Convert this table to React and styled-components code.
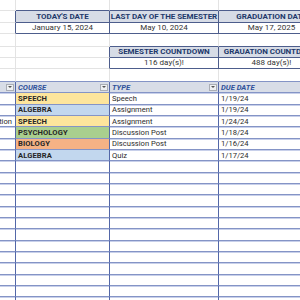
import React from 'react';
import styled, { createGlobalStyle } from 'styled-components';

const GRID = '#e3e3e3';
const BOX = '#4d5d8c';
const TV = '#5367a8';
const TH = '#8494c6';

const GlobalStyle = createGlobalStyle`
  html, body { margin: 0; padding: 0; background: #fff; overflow: hidden; }
  * { box-sizing: border-box; }
`;

const Sheet = styled.div`
  display: grid;
  grid-template-columns: 16px 94px 109px 106px;
  grid-template-rows: 11px 11.5px 11.5px 12.5px 11px 11.5px 13px repeat(20, 11.333px);
  width: 300px;
  height: 300px;
  overflow: hidden;
  font-family: Roboto, "Liberation Sans", sans-serif;
  color: #2b2b2b;
`;

const Cell = styled.div`
  display: flex;
  align-items: center;
  justify-content: ${(p) => p.$align || 'flex-start'};
  padding: 0 2px;
  white-space: nowrap;
  overflow: hidden;
  font-size: 7.6px;
  background: ${(p) => p.$bg || 'transparent'};
  border-right: 1px solid ${(p) => p.$r || GRID};
  border-bottom: 1px solid ${(p) => p.$b || GRID};
  box-shadow: ${(p) => (p.$b === TH ? '0 1px 0 #c8d0ea' : 'none')};
`;

const BoxHead = styled(Cell).attrs({ $align: 'center', $bg: '#d7dce6', $r: BOX, $b: BOX })`
  font-size: 8px;
  font-weight: 700;
  color: #22396b;
  letter-spacing: -0.05px;
`;

const BoxValue = styled(Cell).attrs({ $align: 'center', $r: BOX, $b: BOX })`
  font-size: 8px;
  color: #333;
`;

const ColHead = styled(Cell).attrs({ $bg: '#d8dde7', $r: TV, $b: TH })`
  font-weight: 700;
  font-style: italic;
  color: #2f519a;
  padding-right: 1px;
`;

const DropButton = styled.span`
  margin-left: auto;
  flex: none;
  width: 8px;
  height: 7px;
  border: 1px solid #a9adb5;
  background: #eef0f3;
  display: flex;
  align-items: center;
  justify-content: center;
  &::after {
    content: '';
    border-left: 2px solid transparent;
    border-right: 2px solid transparent;
    border-top: 2.5px solid #555;
  }
`;

const DataCell = styled(Cell).attrs({ $r: TV, $b: TH })``;

const Overflow = styled(DataCell)`
  justify-content: flex-end;
  padding-right: 3px;
`;

const CourseCell = styled(DataCell)`
  font-weight: 700;
  color: #262626;
  letter-spacing: 0.1px;
`;

const FILLS = {
  SPEECH: '#fde59c',
  ALGEBRA: '#c2d7ee',
  PSYCHOLOGY: '#a9cf8e',
  BIOLOGY: '#f5b285',
};

const rows = [
  { a: '', course: 'SPEECH', type: 'Speech', due: '1/19/24' },
  { a: '', course: 'ALGEBRA', type: 'Assignment', due: '1/19/24' },
  { a: 'Speech Preparation', course: 'SPEECH', type: 'Assignment', due: '1/24/24' },
  { a: '', course: 'PSYCHOLOGY', type: 'Discussion Post', due: '1/18/24' },
  { a: '', course: 'BIOLOGY', type: 'Discussion Post', due: '1/16/24' },
  { a: '', course: 'ALGEBRA', type: 'Quiz', due: '1/17/24' },
];

const EMPTY_ROWS = 14;

export default function App() {
  return (
    <>
      <GlobalStyle />
      <Sheet>
        {/* row 1 */}
        <Cell />
        <Cell $b={BOX} />
        <Cell $b={BOX} />
        <Cell $b={BOX} />
        {/* row 2 */}
        <Cell $r={BOX} />
        <BoxHead>TODAY&apos;S DATE</BoxHead>
        <BoxHead>LAST DAY OF THE SEMESTER</BoxHead>
        <BoxHead>GRADUATION DATE</BoxHead>
        {/* row 3 */}
        <Cell $r={BOX} />
        <BoxValue>January 15, 2024</BoxValue>
        <BoxValue>May 10, 2024</BoxValue>
        <BoxValue>May 17, 2025</BoxValue>
        {/* row 4 */}
        <Cell />
        <Cell />
        <Cell $b={BOX} />
        <Cell $b={BOX} />
        {/* row 5 */}
        <Cell />
        <Cell $r={BOX} />
        <BoxHead>SEMESTER COUNTDOWN</BoxHead>
        <BoxHead>GRAUATION COUNTDOWN</BoxHead>
        {/* row 6 */}
        <Cell />
        <Cell $r={BOX} />
        <BoxValue>116 day(s)!</BoxValue>
        <BoxValue>488 day(s)!</BoxValue>
        {/* row 7 */}
        <Cell $b={TH} />
        <Cell $b={TH} />
        <Cell $b={TH} />
        <Cell $b={TH} />
        {/* table header */}
        <ColHead>
          <DropButton />
        </ColHead>
        <ColHead>
          COURSE
          <DropButton />
        </ColHead>
        <ColHead>
          TYPE
          <DropButton />
        </ColHead>
        <ColHead>
          DUE DATE
          <DropButton />
        </ColHead>
        {rows.map((r, i) => (
          <React.Fragment key={i}>
            <Overflow>{r.a}</Overflow>
            <CourseCell $bg={FILLS[r.course]}>{r.course}</CourseCell>
            <DataCell>{r.type}</DataCell>
            <DataCell>{r.due}</DataCell>
          </React.Fragment>
        ))}
        {Array.from({ length: EMPTY_ROWS }).map((_, i) => (
          <React.Fragment key={`e${i}`}>
            <DataCell />
            <DataCell />
            <DataCell />
            <DataCell />
          </React.Fragment>
        ))}
      </Sheet>
    </>
  );
}
